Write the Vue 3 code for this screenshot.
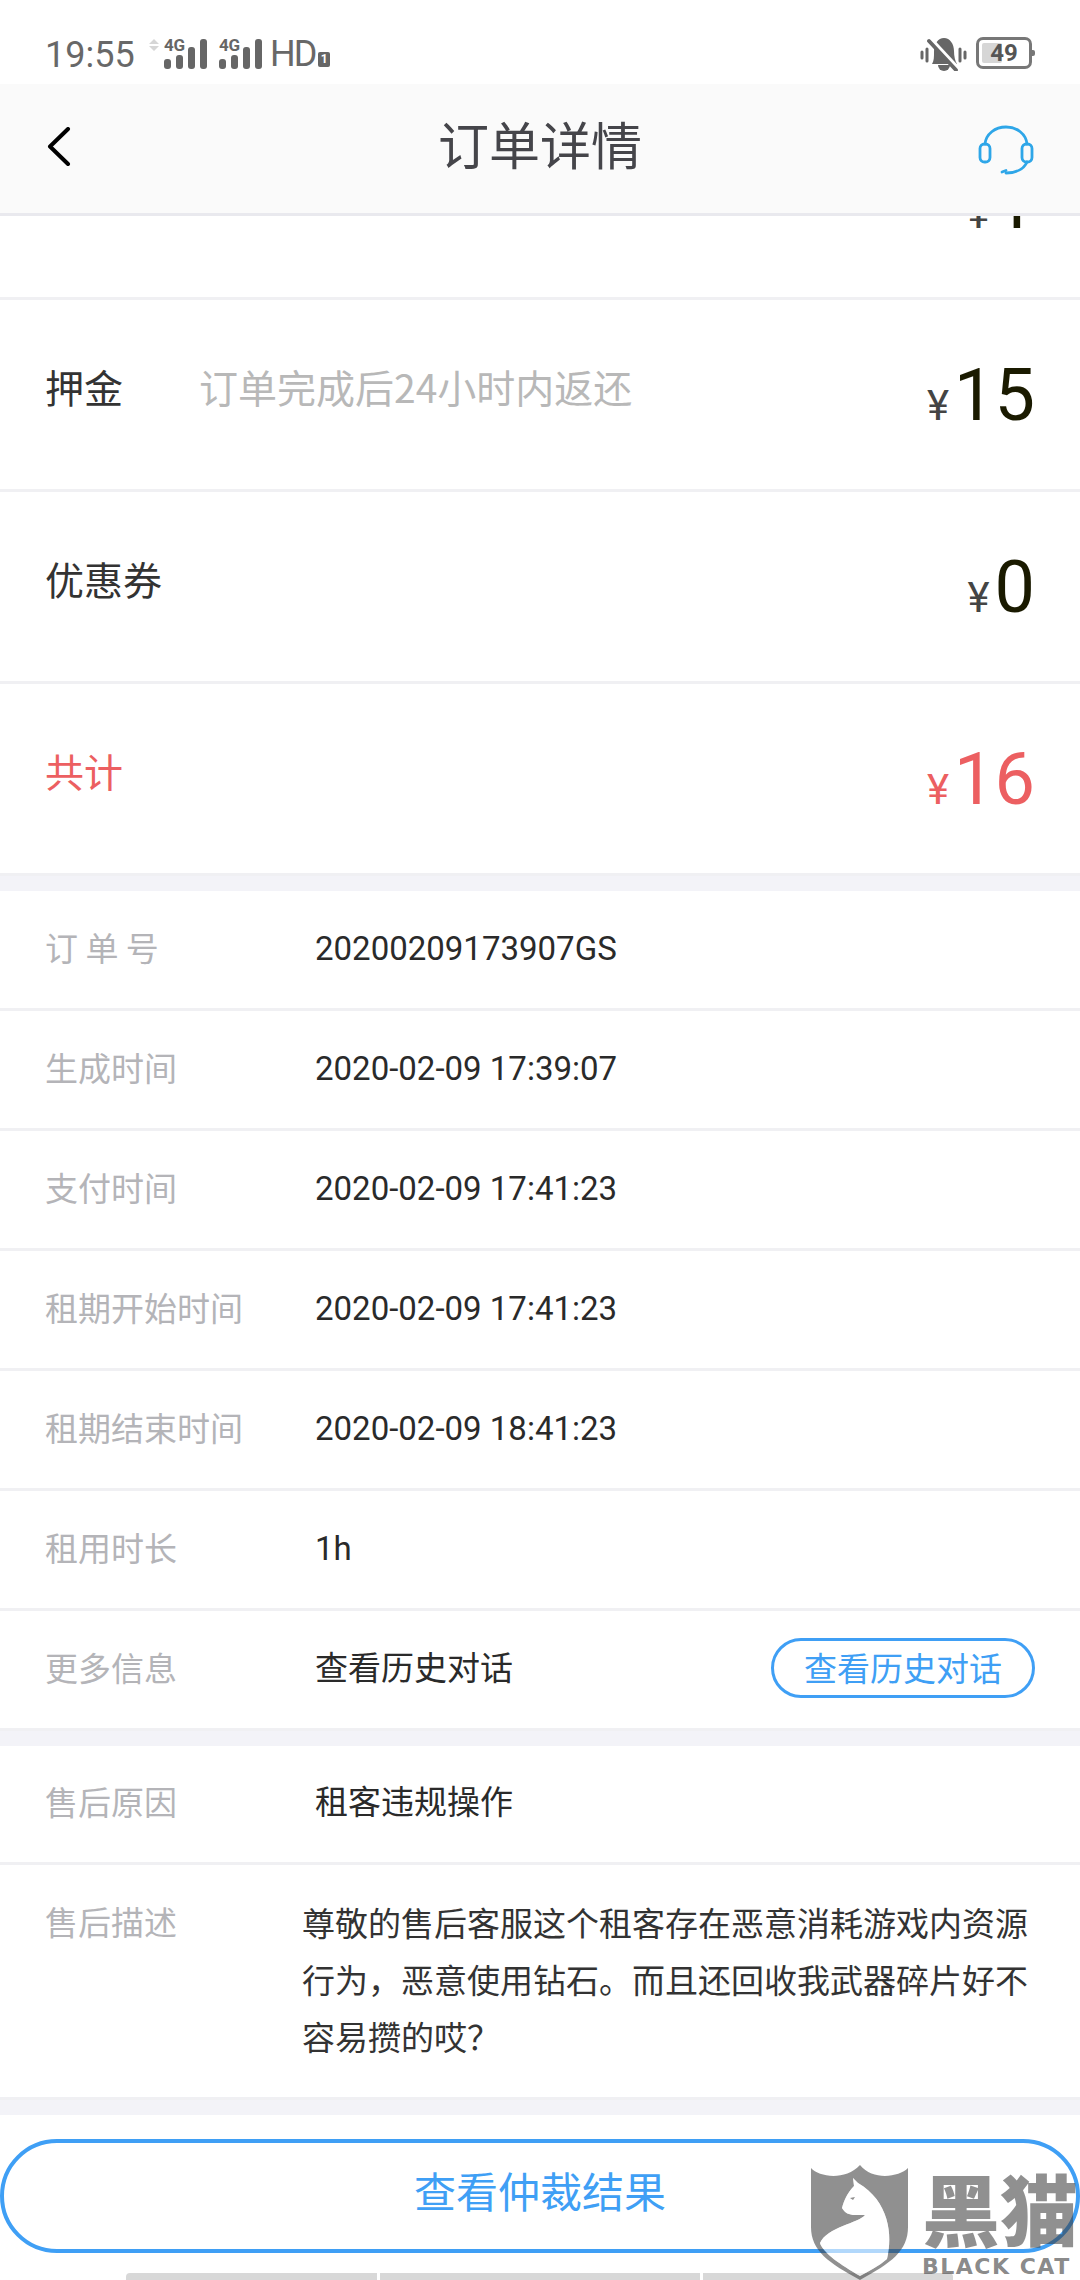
<script setup>
const prices = [
  { label: '', amount: '1' },
  { label: '押金', note: '订单完成后24小时内返还', amount: '15' },
  { label: '优惠券', amount: '0' },
  { label: '共计', amount: '16', total: true }
]
const info = [
  { label: '订 单 号', value: '20200209173907GS' },
  { label: '生成时间', value: '2020-02-09 17:39:07' },
  { label: '支付时间', value: '2020-02-09 17:41:23' },
  { label: '租期开始时间', value: '2020-02-09 17:41:23' },
  { label: '租期结束时间', value: '2020-02-09 18:41:23' },
  { label: '租用时长', value: '1h' },
  { label: '更多信息', value: '查看历史对话', action: '查看历史对话' }
]
</script>

<template>
  <div class="page">
    <div class="status">
      <div class="status-left">
        <span class="time">19:55</span>
        <svg class="arrows" width="10" height="12" viewBox="0 0 10 12"><path d="M5 0l5 5H0zM0 7h10l-5 5z" fill="#d6d6d6"/></svg>
        <div class="sim" v-for="n in 2" :key="n">
          <span class="net">4G</span>
          <i class="bar b1"></i><i class="bar b2"></i><i class="bar b3"></i><i class="bar b4"></i>
        </div>
        <span class="hd">HD</span>
        <span class="hd-badge">1</span>
      </div>
      <div class="status-right">
        <svg class="bell" width="47" height="34" viewBox="0 0 47 34">
          <path d="M12 27c2-3 2-7 2-12 0-8 4-14 10-14s10 6 10 13c0 5 1 10 3 13z" fill="#666"/>
          <path d="M18 28a6 6 0 0 0 12 0z" fill="#666"/>
          <path d="M11 3l26 28" stroke="#fff" stroke-width="5"/>
          <path d="M9 4l27 29" stroke="#666" stroke-width="3.800" stroke-linecap="round"/>
          <path d="M2 15v6M7 12v12M40 12v12M45 15v6" stroke="#666" stroke-width="3" stroke-linecap="round"/>
        </svg>
        <div class="battery">
          <i class="battery-fill"></i>
          <span class="battery-num">49</span>
          <i class="battery-nub"></i>
        </div>
      </div>
    </div>

    <header class="nav">
      <svg class="back" width="24" height="40" viewBox="0 0 24 40"><path d="M21 2L3 19.500 21 37" fill="none" stroke="#000" stroke-width="4" stroke-linecap="round" stroke-linejoin="round"/></svg>
      <h1 class="title">订单详情</h1>
      <svg class="service" width="56" height="50" viewBox="0 0 56 50" fill="none" stroke="#2ea6e8" stroke-width="2.800" stroke-linecap="round">
        <path d="M7 19C8 9 17 2 28 2s20 7 21 17"/>
        <rect x="2" y="19" width="10" height="18" rx="4.500"/>
        <rect x="44" y="19" width="10" height="18" rx="4.500"/>
        <path d="M49 37c-3 7-11 11-21 11"/>
        <path d="M24 47l4-1.500"/>
      </svg>
    </header>

    <main class="content">
      <section class="prices">
        <div v-for="(p, i) in prices" :key="i" class="price-row" :class="{ total: p.total }">
          <span class="price-label">{{ p.label }}</span>
          <span v-if="p.note" class="price-note">{{ p.note }}</span>
          <span class="amount"><small>¥</small>{{ p.amount }}</span>
        </div>
      </section>

      <section class="info">
        <div v-for="row in info" :key="row.label" class="info-row">
          <span class="info-label">{{ row.label }}</span>
          <span class="info-value">{{ row.value }}</span>
          <button v-if="row.action" class="pill">{{ row.action }}</button>
        </div>
      </section>

      <section class="after">
        <div class="reason">
          <span class="info-label">售后原因</span>
          <span class="info-value">租客违规操作</span>
        </div>
        <div class="desc">
          <span class="info-label">售后描述</span>
          <p class="desc-text">尊敬的售后客服这个租客存在恶意消耗游戏内资源行为，恶意使用钻石。而且还回收我武器碎片好不容易攒的哎？</p>
        </div>
      </section>

      <div class="action">
        <button class="result">查看仲裁结果</button>
      </div>
    </main>

    <div class="home">
      <i class="seg s1"></i><i class="seg s2"></i><i class="seg s3"></i>
    </div>

    <div class="watermark">
      <svg class="shield" width="97" height="115" viewBox="0 0 97 115">
        <path fill-rule="evenodd" fill="rgba(60,60,60,.57)" d="M0 3C8 12 34 16 49 0C62 16 88 12 97 3V62C97 86 80 98 49 115C18 98 0 86 0 62ZM42 13L43 21C36 28 33 36 31 43C34 48 38 50 44 50H54C48 58 16 62 9 78C12 88 30 100 49 111C58 106 68 101 76 94C82 70 78 36 47 18Z"/>
        <path fill="rgba(255,255,255,.6)" d="M42 13L43 21C36 28 33 36 31 43C34 48 38 50 44 50H54C48 58 16 62 9 78C12 88 30 100 49 111C58 106 68 101 76 94C82 70 78 36 47 18Z"/>
        <path fill="#8f8e8f" d="M39 33l5-1-2 3z"/>
      </svg>
      <div class="brand">
        <span class="brand-cn">黑猫</span>
        <span class="brand-en">BLACK CAT</span>
      </div>
    </div>
  </div>
</template>

<style>
html, body { margin: 0; background: #fff; }
</style>

<style scoped>
.page {
  position: relative;
  width: 1080px;
  height: 2280px;
  overflow: hidden;
  display: flex;
  flex-direction: column;
  background: #fff;
  font-family: "Noto Sans CJK SC", "Noto Sans", sans-serif;
}
.status {
  height: 84px;
  flex: none;
  display: flex;
  justify-content: space-between;
  padding: 39px 45px 0;
  box-sizing: border-box;
  color: #666;
}
.status-left { display: flex; align-items: flex-start; }
.time { font: 400 36px/32px Roboto, sans-serif; width: 104px; color: #686868; }
.arrows { margin-top: 0; margin-right: 5px; }
.sim { position: relative; width: 43px; height: 30px; margin-right: 12px; }
.net {
  position: absolute; left: 0; top: -2px;
  font: 700 17px/16px Roboto, sans-serif;
  color: #666;
  letter-spacing: -.3px;
}
.bar { position: absolute; bottom: 0; width: 7px; border-radius: 3px; background: #666; }
.b1 { left: 0; height: 10px; }
.b2 { left: 12px; height: 14px; }
.b3 { left: 24px; height: 22px; }
.b4 { left: 36px; height: 30px; }
.hd { font: 400 36px/30px Roboto, sans-serif; margin-left: -4px; color: #686868; letter-spacing: -2px; }
.hd-badge {
  width: 12px; height: 15px; margin: 13px 0 0 3px;
  background: #666; border-radius: 2px; color: #fff;
  font: 700 12px/15px Roboto, sans-serif; text-align: center;
}
.status-right { display: flex; align-items: flex-start; margin-top: -2px; margin-right: 3px; }
.bell { margin-right: 9px; }
.battery {
  position: relative; width: 56px; height: 32px; box-sizing: border-box;
  border: 3px solid #777; border-radius: 7px;
}
.battery-fill { position: absolute; left: 3px; top: 3px; width: 20px; height: 20px; background: #d6d6d6; border-radius: 2px; }
.battery-num {
  position: absolute; inset: 0; text-align: center;
  font: 700 24px/26px Roboto, sans-serif; color: #555;
}
.battery-nub { position: absolute; right: -6px; top: 10px; width: 3px; height: 6px; background: #777; border-radius: 0 2px 2px 0; }

.nav {
  position: relative; z-index: 1;
  height: 132px; flex: none;
  box-sizing: border-box;
  background: #fafafa;
  border-bottom: 3px solid #e9e9ee;
  display: flex; align-items: center; justify-content: center;
}
.back { position: absolute; left: 47px; top: 43px; }
.title { margin: -10px 0 0; font-size: 51px; font-weight: 400; color: #45454a; line-height: 1; }
.service { position: absolute; left: 978px; top: 41px; }

.content { flex: 1; overflow: hidden; min-height: 0; background: #f3f3f8; }
.prices { margin-top: -108px; background: #fff; }
.price-row {
  height: 192px; box-sizing: border-box;
  border-bottom: 3px solid #f0f0f3;
  display: flex; align-items: center;
  padding: 0 45px;
  color: #333;
}
.price-label { font-size: 39px; line-height: 1; width: 154px; flex: none; margin-top: -16px; }
.price-note { font-size: 39px; color: #b8b8b8; line-height: 1; margin-top: -16px; }
.amount {
  margin-left: auto;
  font: 400 72px/1 Roboto, sans-serif;
  color: #1a1a00;
  margin-top: 2px;
}
.amount small { font-size: 42px; color: #444; margin-right: 5px; font-family: Roboto, sans-serif; }
.total .price-label, .total .amount, .total .amount small { color: #ec5f61; }

.info { margin-top: 15px; background: #fff; }
.info-row {
  height: 120px; box-sizing: border-box;
  border-bottom: 3px solid #f0f0f3;
  display: flex; align-items: center;
  padding: 0 45px;
}
.info-label { width: 270px; flex: none; font-size: 33px; color: #b4b4b8; line-height: 1; margin-top: -5px; }
.info-value { font: 400 33px/1 Roboto, "Noto Sans CJK SC", sans-serif; color: #2a2a2a; margin-top: -3px; }
.pill {
  margin-left: auto; width: 264px; height: 60px; padding: 0 0 2px;
  background: #fff; border: 3px solid #3f9ff5; border-radius: 30px;
  color: #3f9ff5; font: 400 33px/1 "Noto Sans CJK SC", sans-serif;
  margin-top: -3px;
}
.after { margin-top: 15px; background: #fff; }
.reason {
  height: 119px; box-sizing: border-box;
  border-bottom: 3px solid #f0f0f3;
  display: flex; align-items: center;
  padding: 0 45px;
}
.desc {
  height: 235px; box-sizing: border-box;
  border-bottom: 3px solid #f0f0f3;
  display: flex; align-items: flex-start;
  padding: 29px 45px 0;
}
.desc .info-label { width: 257px; margin-top: 11px; }
.desc-text { margin: 0; width: 733px; font-size: 33px; line-height: 57px; color: #333; }
.action { background: #fff; padding: 24px 0 100px; margin-top: 15px; }
.result {
  display: block; width: 1080px; height: 114px; padding: 0 0 12px;
  background: #fff; border: 4px solid #3f9ff5; border-radius: 57px;
  color: #3f9ff5; font: 400 42px/1 "Noto Sans CJK SC", sans-serif;
}
.home { position: absolute; left: 0; right: 0; bottom: 0; height: 7px; }
.seg { position: absolute; top: 0; height: 7px; background: #d8d8d8; }
.s1 { left: 126px; width: 251px; border-radius: 4px 0 0 0; }
.s2 { left: 380px; width: 320px; }
.s3 { left: 703px; width: 250px; border-radius: 0 4px 0 0; }

.watermark { position: absolute; left: 811px; top: 2165px; width: 269px; height: 115px; display: flex; }
.shield { flex: none; }
.brand { margin-left: 14px; display: flex; flex-direction: column; }
.brand-cn { font-size: 78px; font-weight: 900; line-height: 78px; margin-top: 3px; white-space: nowrap; color: rgba(60,60,60,.57); }
.brand-en { font: 700 22px/24px "DejaVu Sans", sans-serif; letter-spacing: 1.500px; margin-top: 9px; white-space: nowrap; color: rgba(60,60,60,.62); }
</style>
